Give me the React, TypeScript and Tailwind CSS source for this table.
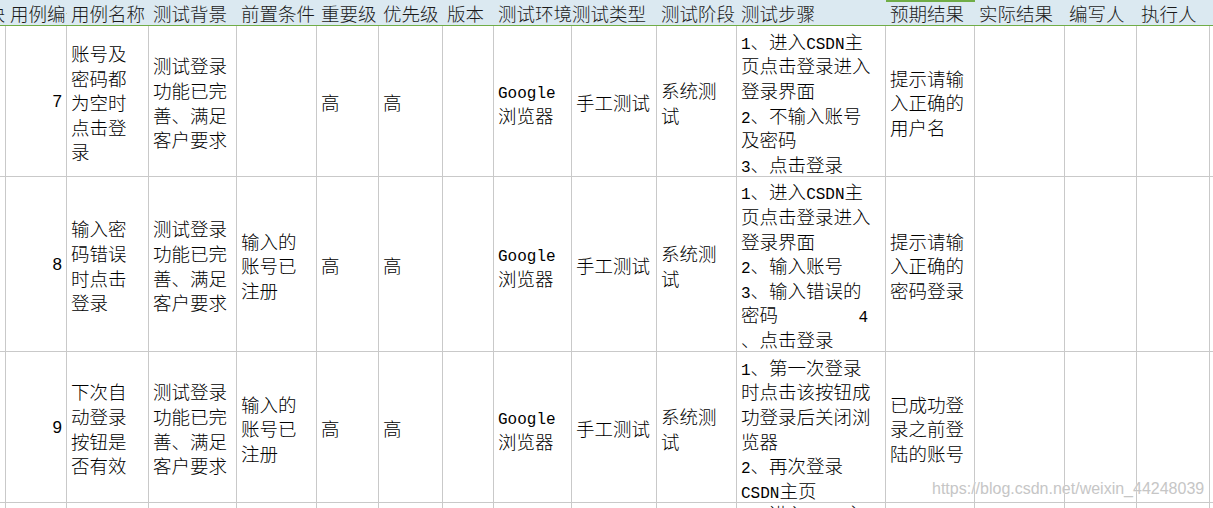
import React from 'react';

const COLS =
  'grid-cols-[6px_61px_82px_88px_80px_62px_64px_51px_78px_85px_80px_149px_89px_90px_72px_73px_1fr]';

const headers = [
  '块',
  '用例编号',
  '用例名称',
  '测试背景',
  '前置条件',
  '重要级',
  '优先级',
  '版本',
  '测试环境',
  '测试类型',
  '测试阶段',
  '测试步骤',
  '预期结果',
  '实际结果',
  '编写人',
  '执行人',
  '',
];

type Line = string | { left: string; right: string };

interface CaseRow {
  no: number;
  name: Line[];
  background: Line[];
  precondition: Line[];
  importance: string;
  priority: string;
  env: Line[];
  kind: Line[];
  stage: Line[];
  steps: Line[];
  expected: Line[];
}

const background = ['测试登录', '功能已完', '善、满足', '客户要求'];
const env = ['Google', '浏览器'];

const rows: CaseRow[] = [
  {
    no: 7,
    name: ['账号及', '密码都', '为空时', '点击登', '录'],
    background,
    precondition: [],
    importance: '高',
    priority: '高',
    env,
    kind: ['手工测试'],
    stage: ['系统测', '试'],
    steps: ['1、进入CSDN主', '页点击登录进入', '登录界面', '2、不输入账号', '及密码', '3、点击登录'],
    expected: ['提示请输', '入正确的', '用户名'],
  },
  {
    no: 8,
    name: ['输入密', '码错误', '时点击', '登录'],
    background,
    precondition: ['输入的', '账号已', '注册'],
    importance: '高',
    priority: '高',
    env,
    kind: ['手工测试'],
    stage: ['系统测', '试'],
    steps: [
      '1、进入CSDN主',
      '页点击登录进入',
      '登录界面',
      '2、输入账号',
      '3、输入错误的',
      { left: '密码', right: '4' },
      '、点击登录',
    ],
    expected: ['提示请输', '入正确的', '密码登录'],
  },
  {
    no: 9,
    name: ['下次自', '动登录', '按钮是', '否有效'],
    background,
    precondition: ['输入的', '账号已', '注册'],
    importance: '高',
    priority: '高',
    env,
    kind: ['手工测试'],
    stage: ['系统测', '试'],
    steps: ['1、第一次登录', '时点击该按钮成', '功登录后关闭浏', '览器', '2、再次登录', 'CSDN主页'],
    expected: ['已成功登', '录之前登', '陆的账号'],
  },
];

// latin runs look half-width in the sheet font, so set them in a mono face
function mix(s: string) {
  return s.split(/([A-Za-z0-9]+)/).map((part, i) =>
    /^[A-Za-z0-9]+$/.test(part) ? (
      <span key={i} className="font-['Liberation_Mono',monospace] text-[16px] leading-none">
        {part}
      </span>
    ) : (
      <span key={i}>{part}</span>
    )
  );
}

function Lines({ lines }: { lines: Line[] }) {
  return (
    <div className="flex flex-col">
      {lines.map((l, i) =>
        typeof l === 'string' ? (
          <div key={i} className="h-[24.6px] whitespace-nowrap">
            {mix(l)}
          </div>
        ) : (
          <div key={i} className="flex h-[24.6px] w-[127px] justify-between whitespace-nowrap">
            <span>{mix(l.left)}</span>
            <span>{mix(l.right)}</span>
          </div>
        )
      )}
    </div>
  );
}

function Cell({ children, className = '' }: { children?: React.ReactNode; className?: string }) {
  return (
    <div className={`flex items-center border-r border-b border-[#c9c9c9] pl-[4px] pt-[3px] ${className}`}>
      {children}
    </div>
  );
}

function Row({ r }: { r: CaseRow }) {
  return (
    <>
      <Cell />
      <Cell className="justify-end pr-[4px] pl-0">
        <span className="font-['Liberation_Sans',sans-serif] text-[17px]">{r.no}</span>
      </Cell>
      <Cell>
        <Lines lines={r.name} />
      </Cell>
      <Cell>
        <Lines lines={r.background} />
      </Cell>
      <Cell>
        <Lines lines={r.precondition} />
      </Cell>
      <Cell>{r.importance}</Cell>
      <Cell>{r.priority}</Cell>
      <Cell />
      <Cell>
        <Lines lines={r.env} />
      </Cell>
      <Cell>
        <Lines lines={r.kind} />
      </Cell>
      <Cell>
        <Lines lines={r.stage} />
      </Cell>
      <Cell>
        <Lines lines={r.steps} />
      </Cell>
      <Cell>
        <Lines lines={r.expected} />
      </Cell>
      <Cell />
      <Cell />
      <Cell />
      <div className="border-b border-[#c9c9c9]" />
    </>
  );
}

export default function App() {
  return (
    <div className="relative h-[508px] w-[1213px] overflow-hidden bg-white font-['Noto_Sans_CJK_SC',sans-serif] text-[18.5px] font-light leading-[24.6px] text-black">
      <div className={`grid ${COLS} grid-rows-[26px_151px_175px_151px_60px]`}>
        {headers.map((h, i) => (
          <div
            key={i}
            className={`flex items-center whitespace-nowrap border-b border-[#70ad47] bg-[#dbe9f1] pt-[2px] text-[#1a1a1a] ${
              i === 0
                ? 'justify-end overflow-hidden pr-[1px]'
                : i === 1
                ? 'overflow-hidden pl-[4px]'
                : i === 9
                ? 'pl-0'
                : 'pl-[4px]'
            } ${i === 12 ? 'shadow-[inset_0_2px_0_#70ad47]' : ''}`}
          >
            {h}
          </div>
        ))}

        {rows.map((r) => (
          <Row key={r.no} r={r} />
        ))}

        {/* next row, only its first line peeks in at the bottom */}
        {Array.from({ length: 16 }).map((_, i) => (
          <div key={i} className="border-r border-[#c9c9c9] pl-[4px]">
            {i === 11 && <div className="-mt-[2px] h-[24.6px] whitespace-nowrap">{mix('1、进入CSDN主')}</div>}
          </div>
        ))}
        <div />
      </div>

      <div className="absolute left-[932px] top-[481px] font-['Liberation_Sans',sans-serif] text-[16px] font-normal leading-none text-[#c6c6c6] [text-shadow:0_0_1px_#ffffff]">
        https://blog.csdn.net/weixin_44248039
      </div>
    </div>
  );
}
